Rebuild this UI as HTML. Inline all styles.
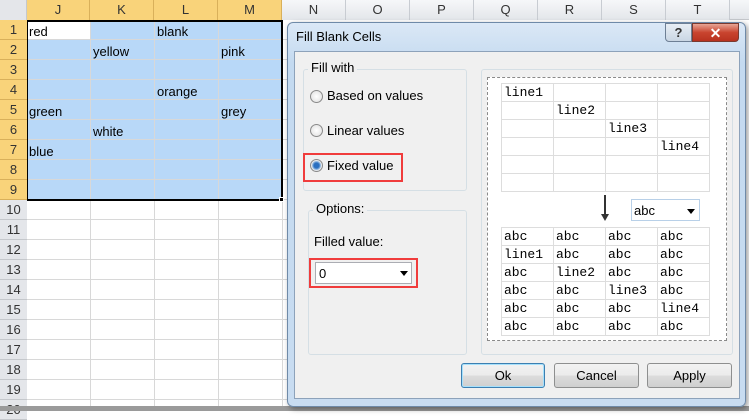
<!DOCTYPE html><html><head><style>
*{margin:0;padding:0;box-sizing:border-box}
body{width:749px;height:411px;position:relative;overflow:hidden;background:#fff;font-family:"Liberation Sans",sans-serif;font-size:13px;color:#000}
.a{position:absolute}
.ch{background:#f9d37a;border-right:1px solid #d9b05a;text-align:center;line-height:20px;font-size:13px;color:#333}
.chn{background:linear-gradient(#f6f7f9,#e3e6ea);border-right:1px solid #c8ccd2;text-align:center;line-height:20px;font-size:13px;color:#333}
.rh{background:#f9d37a;border-bottom:1px solid #d9b05a;text-align:center;line-height:20px;font-size:13px;color:#333;width:27px;left:0}
.rhn{background:#e4e6ea;border-bottom:1px solid #c5c8cc;text-align:center;line-height:20px;font-size:13px;color:#333;width:27px;left:0}
.t{font-size:13px;line-height:20px}
.mono{font-family:"Liberation Mono","DejaVu Sans Mono",monospace;font-size:13px}
.btn{border:1px solid #8e8f8f;border-radius:3px;background:linear-gradient(#f2f2f2,#ebebeb 50%,#dcdcdc 51%,#cfcfcf);text-align:center;line-height:23px;font-size:13px}
.rad{width:13px;height:13px;border-radius:50%;border:1px solid #8a8a8a;background:radial-gradient(#fff,#ddd)}
.vl{position:absolute;width:1px;background:#d8d8d8}
.hl{position:absolute;height:1px;background:#d8d8d8}
</style></head><body>
<div class="a" style="left:0;top:0;width:749px;height:20px;background:linear-gradient(#f6f7f9,#e3e6ea);border-bottom:1px solid #c5c8cc"></div>
<div class="a" style="left:0;top:0;width:27px;height:20px;background:#e4e6ea;border-right:1px solid #c5c8cc"></div>
<div class="a ch" style="left:27px;top:0;width:63px;height:20px">J</div>
<div class="a ch" style="left:90px;top:0;width:64px;height:20px">K</div>
<div class="a ch" style="left:154px;top:0;width:64px;height:20px">L</div>
<div class="a ch" style="left:218px;top:0;width:64px;height:20px">M</div>
<div class="a chn" style="left:282px;top:0;width:64px;height:20px">N</div>
<div class="a chn" style="left:346px;top:0;width:64px;height:20px">O</div>
<div class="a chn" style="left:410px;top:0;width:64px;height:20px">P</div>
<div class="a chn" style="left:474px;top:0;width:64px;height:20px">Q</div>
<div class="a chn" style="left:538px;top:0;width:64px;height:20px">R</div>
<div class="a chn" style="left:602px;top:0;width:64px;height:20px">S</div>
<div class="a chn" style="left:666px;top:0;width:64px;height:20px">T</div>
<div class="a" style="left:27px;top:20px;width:255px;height:180px;background:#b8d8f8"></div>
<div class="a" style="left:28px;top:21px;width:62px;height:19px;background:#fff"></div>
<div id="lines"></div>
<div class="a" style="left:26px;top:20px;width:257px;height:181px;border:2px solid #000"></div>
<div class="a" style="left:279px;top:197px;width:5px;height:5px;background:#000;border:1px solid #fff"></div>
<div class="a rh" style="top:20px;height:20px">1</div><div class="a rh" style="top:40px;height:20px">2</div><div class="a rh" style="top:60px;height:20px">3</div><div class="a rh" style="top:80px;height:20px">4</div><div class="a rh" style="top:100px;height:20px">5</div><div class="a rh" style="top:120px;height:20px">6</div><div class="a rh" style="top:140px;height:20px">7</div><div class="a rh" style="top:160px;height:20px">8</div><div class="a rh" style="top:180px;height:20px">9</div>
<div class="a rhn" style="top:200px;height:20px">10</div><div class="a rhn" style="top:220px;height:20px">11</div><div class="a rhn" style="top:240px;height:20px">12</div><div class="a rhn" style="top:260px;height:20px">13</div><div class="a rhn" style="top:280px;height:20px">14</div><div class="a rhn" style="top:300px;height:20px">15</div><div class="a rhn" style="top:320px;height:20px">16</div><div class="a rhn" style="top:340px;height:20px">17</div><div class="a rhn" style="top:360px;height:20px">18</div><div class="a rhn" style="top:380px;height:20px">19</div><div class="a rhn" style="top:400px;height:20px">20</div>
<div class="a" style="left:0;top:406px;width:749px;height:5px;background:#9a9a9a"></div>
<div class="a t" style="left:29px;top:22px">red</div>
<div class="a t" style="left:157px;top:22px">blank</div>
<div class="a t" style="left:93px;top:42px">yellow</div>
<div class="a t" style="left:221px;top:42px">pink</div>
<div class="a t" style="left:157px;top:82px">orange</div>
<div class="a t" style="left:29px;top:102px">green</div>
<div class="a t" style="left:221px;top:102px">grey</div>
<div class="a t" style="left:93px;top:122px">white</div>
<div class="a t" style="left:29px;top:142px">blue</div>
<div class="a" style="left:287px;top:22px;width:459px;height:385px;border:1px solid #6f8aa8;border-radius:6px;background:linear-gradient(#dbe8f6,#c4daf0 40px,#c8dcf1);box-shadow:2px 2px 6px rgba(0,0,0,.4)"></div>
<div class="a" style="left:296px;top:29px;font-size:13px">Fill Blank Cells</div>
<div class="a" style="left:665px;top:23px;width:27px;height:19px;border:1px solid #6d7f95;border-radius:0 0 0 4px;background:linear-gradient(#e8eef5,#c9d6e4);text-align:center;font-weight:bold;color:#333;font-size:13px;line-height:18px">?</div>
<div class="a" style="left:692px;top:23px;width:47px;height:19px;border:1px solid #7a3a30;border-radius:0 0 4px 0;background:linear-gradient(#e8a595,#c9442f 50%,#b8321f);text-align:center;font-weight:bold;color:#fff;font-size:14px;line-height:18px">✕</div>
<div class="a" style="left:294px;top:51px;width:446px;height:348px;background:#f0f0f0;border:1px solid #8da2ba"></div>
<div class="a" style="left:303px;top:69px;width:164px;height:122px;border:1px solid #d5dfe5;border-radius:3px"></div>
<div class="a" style="left:308px;top:60px;background:#f0f0f0;padding:0 3px;font-size:13px">Fill with</div>
<div class="a rad" style="left:310px;top:90px"></div><div class="a" style="left:327px;top:88px;font-size:13px">Based on values</div>
<div class="a rad" style="left:310px;top:124px"></div><div class="a" style="left:327px;top:123px;font-size:13px">Linear values</div>
<div class="a rad" style="left:310px;top:159px;background:radial-gradient(#2a6fc0 2.5px,#8fb6e0 4px,#eee 5px)"></div><div class="a" style="left:327px;top:158px;font-size:13px">Fixed value</div>
<div class="a" style="left:303px;top:153px;width:100px;height:29px;border:2px solid #f03c3c"></div>
<div class="a" style="left:308px;top:210px;width:159px;height:145px;border:1px solid #d5dfe5;border-radius:3px"></div>
<div class="a" style="left:313px;top:201px;background:#f0f0f0;padding:0 3px;font-size:13px">Options:</div>
<div class="a" style="left:314px;top:234px;font-size:13px">Filled value:</div>
<div class="a" style="left:309px;top:258px;width:109px;height:30px;border:2px solid #f03c3c"></div>
<div class="a" style="left:315px;top:262px;width:97px;height:22px;border:1px solid #abadb3;background:#fff"></div>
<div class="a" style="left:319px;top:266px;font-size:13px">0</div>
<div class="a" style="left:400px;top:271px;border:4px solid transparent;border-top:5px solid #000;border-bottom:0"></div>
<div class="a" style="left:481px;top:69px;width:252px;height:286px;border:1px solid #d5dfe5;border-radius:3px"></div>
<div class="a" style="left:487px;top:77px;width:240px;height:264px;border:1px dashed #8a8a8a;background:#fff"></div>
<table class="a mono" id="g1" style="left:501px;top:83px;border-collapse:collapse"></table>
<table class="a mono" id="g2" style="left:501px;top:227px;border-collapse:collapse"></table>
<div class="a" style="left:604px;top:195px;width:2px;height:21px;background:#333"></div>
<div class="a" style="left:601px;top:214px;border:4px solid transparent;border-top:7px solid #333;border-bottom:0"></div>
<div class="a" style="left:631px;top:199px;width:69px;height:22px;border:1px solid #b8d0e8;background:#fff"></div>
<div class="a" style="left:634px;top:203px;font-size:13px">abc</div>
<div class="a" style="left:687px;top:209px;border:4px solid transparent;border-top:5px solid #000;border-bottom:0"></div>
<div class="a btn" style="left:461px;top:363px;width:84px;height:25px;border-color:#3c7fb1;box-shadow:inset 0 0 0 1px #a6e0fb">Ok</div>
<div class="a btn" style="left:554px;top:363px;width:85px;height:25px">Cancel</div>
<div class="a btn" style="left:647px;top:363px;width:85px;height:25px">Apply</div>
<script>
var L='';[90,154,218].forEach(function(x){L+='<div class="vl" style="left:'+x+'px;top:20px;height:390px"></div>'});
L+='<div class="vl" style="left:282px;top:20px;height:390px"></div>';
for(var y=39;y<410;y+=20)L+='<div class="hl" style="left:27px;top:'+y+'px;width:260px"></div>';
document.getElementById('lines').innerHTML=L;
function mk(id,rows){var h='';rows.forEach(function(r){h+='<tr>';r.forEach(function(c){h+='<td style="border:1px solid #ddd;width:52px;height:18px;padding:0 0 0 2px;line-height:16px">'+c+'</td>'});h+='</tr>'});document.getElementById(id).innerHTML=h}
mk('g1',[['line1','','',''],['','line2','',''],['','','line3',''],['','','','line4'],['','','',''],['','','','']]);
mk('g2',[['abc','abc','abc','abc'],['line1','abc','abc','abc'],['abc','line2','abc','abc'],['abc','abc','line3','abc'],['abc','abc','abc','line4'],['abc','abc','abc','abc']]);
</script>
</body></html>
